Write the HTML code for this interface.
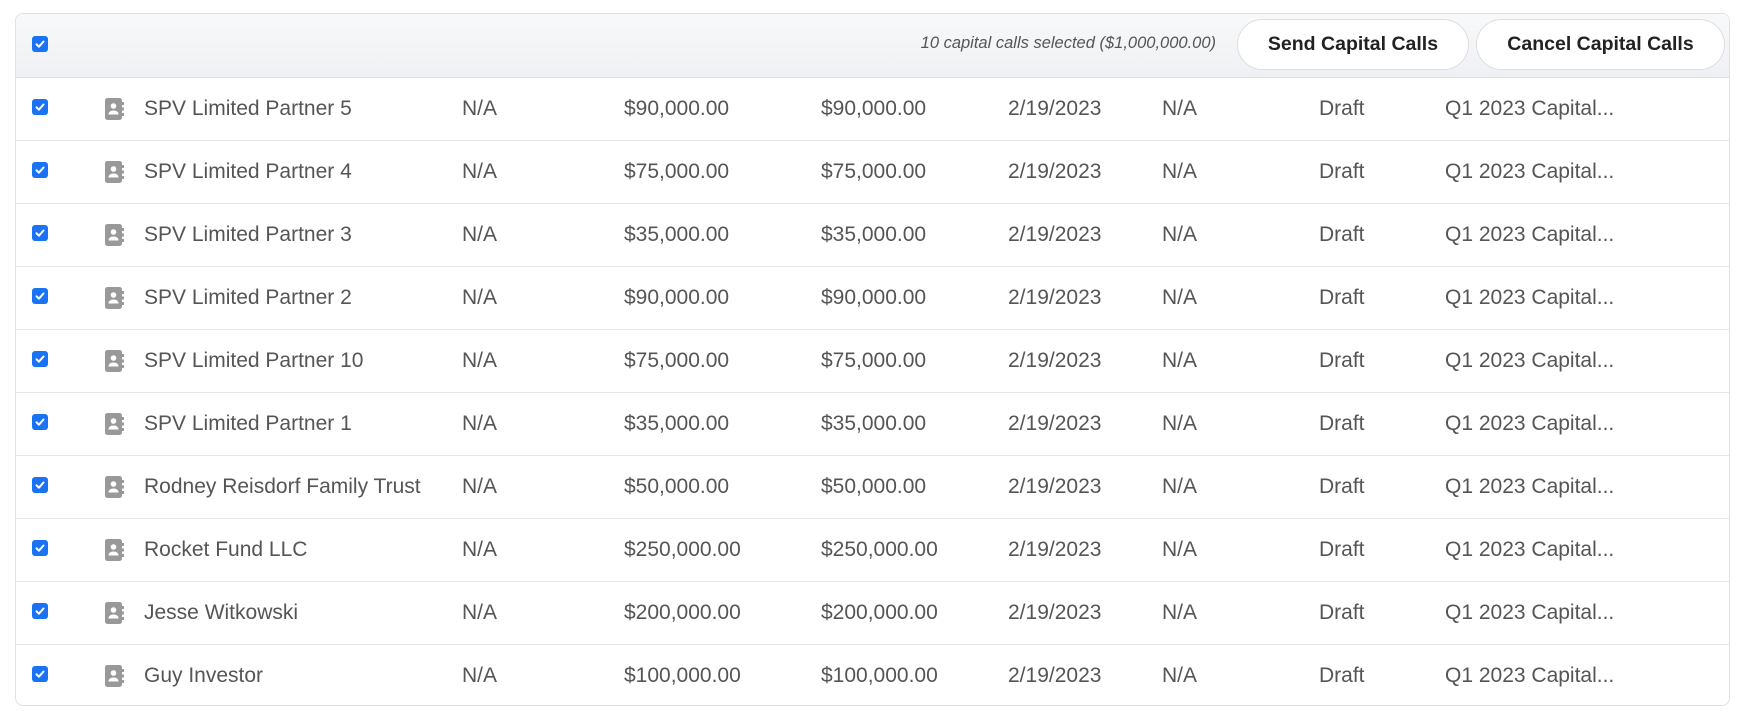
<!DOCTYPE html>
<html><head><meta charset="utf-8"><style>
body{margin:0;width:1746px;height:718px;background:#fff;font-family:"Liberation Sans",Arial,sans-serif;position:relative;overflow:hidden}
.tbl{position:absolute;left:15px;top:13px;width:1715px;height:693px;border:1px solid #dfe1e4;border-radius:8px;box-sizing:border-box;overflow:hidden}
.hdr{position:absolute;left:0;top:0;right:0;height:63px;background:linear-gradient(#f8f9fa,#eef0f3);border-bottom:1px solid #dcdee1}
.cb{position:absolute;width:16px;height:16px;border-radius:3px;background:#1a73f5}
.cb svg{position:absolute;left:2px;top:2px}
.row{position:absolute;left:0;right:0;height:63px;border-bottom:1px solid #e6e7e9}
.row:last-child{border-bottom:none}
.t{position:absolute;top:0px;line-height:63px;font-size:21px;color:#555;white-space:nowrap}
.ico{position:absolute;left:89px;top:21px}
.sel{position:absolute;left:0;width:1200px;text-align:right;top:1px;line-height:56px;font-size:16.5px;font-style:italic;color:#555}
.btn{position:absolute;top:5px;height:51px;border:1px solid #dcdde0;border-radius:26px;background:#fff;font-weight:bold;font-size:19.5px;color:#222;text-align:center;line-height:49px;box-sizing:border-box}
</style></head><body>
<div class="tbl">
<div class="hdr">
<div class="cb" style="left:16px;top:22px"><svg width="12" height="12" viewBox="0 0 12 12"><path d="M2.5 6.3l2.4 2.4 4.6-5.2" stroke="#fff" stroke-width="2" fill="none" stroke-linecap="round" stroke-linejoin="round"/></svg></div>
<div class="sel">10 capital calls selected ($1,000,000.00)</div>
<div class="btn" style="left:1221px;width:232px">Send Capital Calls</div>
<div class="btn" style="left:1460px;width:249px">Cancel Capital Calls</div>
</div>
<div id="rows"></div>
</div>
<script>
var d=[["SPV Limited Partner 5","$90,000.00"],["SPV Limited Partner 4","$75,000.00"],["SPV Limited Partner 3","$35,000.00"],["SPV Limited Partner 2","$90,000.00"],["SPV Limited Partner 10","$75,000.00"],["SPV Limited Partner 1","$35,000.00"],["Rodney Reisdorf Family Trust","$50,000.00"],["Rocket Fund LLC","$250,000.00"],["Jesse Witkowski","$200,000.00"],["Guy Investor","$100,000.00"]];
var h="";
d.forEach(function(r,i){
h+='<div class="row" style="top:'+(63+i*63)+'px">'+
'<div class="cb" style="left:16px;top:22px"><svg width="12" height="12" viewBox="0 0 12 12"><path d="M2.5 6.3l2.4 2.4 4.6-5.2" stroke="#fff" stroke-width="2" fill="none" stroke-linecap="round" stroke-linejoin="round"/></svg></div>'+
'<svg class="ico" width="19" height="22" viewBox="0 0 19 22"><rect x="0" y="0" width="17" height="22" rx="2.5" fill="#999"/><rect x="17" y="4" width="2" height="3" fill="#999"/><rect x="17" y="9.5" width="2" height="3" fill="#999"/><rect x="17" y="15" width="2" height="3" fill="#999"/><circle cx="8.5" cy="8" r="2.8" fill="#fff"/><path d="M3.5 16.5c0-2.6 2.2-4 5-4s5 1.4 5 4z" fill="#fff"/></svg>'+
'<div class="t" style="left:128px">'+r[0]+'</div>'+
'<div class="t" style="left:446px">N/A</div>'+
'<div class="t" style="left:608px">'+r[1]+'</div>'+
'<div class="t" style="left:805px">'+r[1]+'</div>'+
'<div class="t" style="left:992px">2/19/2023</div>'+
'<div class="t" style="left:1146px">N/A</div>'+
'<div class="t" style="left:1303px">Draft</div>'+
'<div class="t" style="left:1429px">Q1 2023 Capital...</div></div>';
});
document.getElementById("rows").innerHTML=h;
</script>
</body></html>
